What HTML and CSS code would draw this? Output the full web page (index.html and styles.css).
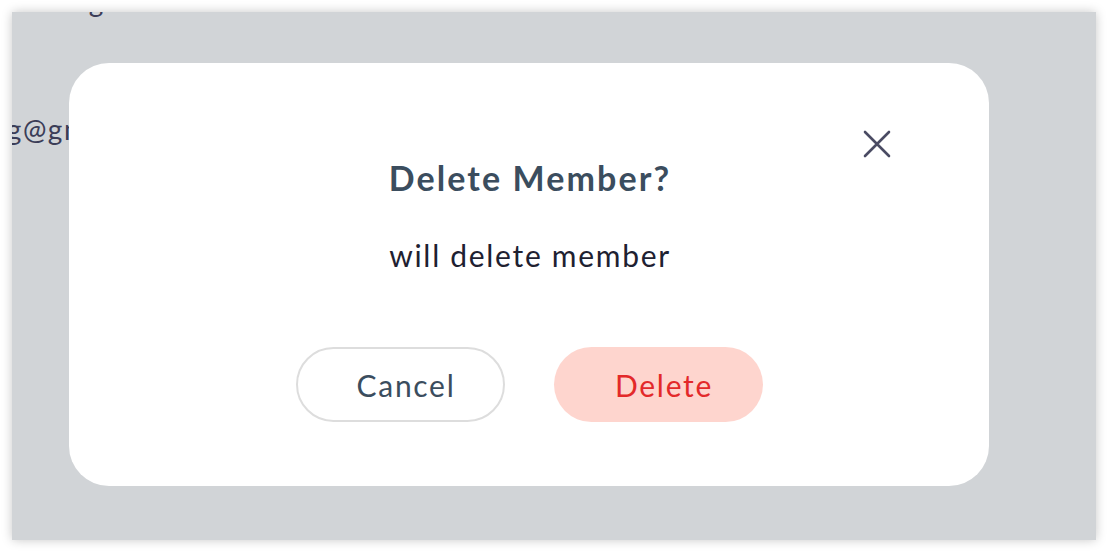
FILE: index.html
```html
<!DOCTYPE html>
<html lang="en">
<head>
<meta charset="utf-8">
<title>Delete Member</title>
<link rel="stylesheet" href="styles.css">
</head>
<body>
<div class="window">
  <div class="page">
    <div class="row row-top">Wang</div>
    <div class="row row-mail">ming@gmail.com</div>
  </div>
  <div class="backdrop">
    <div class="modal" role="dialog" aria-labelledby="dlg-title">
      <button class="close" aria-label="Close">
        <svg width="30" height="30" viewBox="0 0 30 30" fill="none" stroke="#4a4b63" stroke-width="2.6" stroke-linecap="round">
          <path d="M3 3 L27 27 M27 3 L3 27"/>
        </svg>
      </button>
      <h2 class="title" id="dlg-title">Delete Member?</h2>
      <p class="message">will delete member</p>
      <div class="actions">
        <button class="btn btn-cancel">Cancel</button>
        <button class="btn btn-delete">Delete</button>
      </div>
    </div>
  </div>
</div>
</body>
</html>
```
FILE: styles.css
```css
html, body {
  margin: 0;
  padding: 0;
  background: #ffffff;
}
body {
  padding: 12px;
  font-family: "Lato", "Open Sans", "Liberation Sans", sans-serif;
}
.window {
  position: relative;
  width: 1084px;
  height: 528px;
  background: #d1d4d7;
  overflow: hidden;
  box-shadow: 0 0 10px rgba(0, 0, 0, 0.22);
}
.page {
  display: flex;
  flex-direction: column;
  margin-left: -40px;
  margin-top: -31px;
  gap: 88px;
}
.row {
  font-size: 28px;
  line-height: 40px;
  letter-spacing: 0.6px;
  color: #3b3d57;
}
.row-top {
  padding-left: 58px;
}
.row-mail {
  margin-left: -15px;
  letter-spacing: 1.5px;
}
.backdrop {
  position: absolute;
  inset: 0;
  padding: 51px 107px 54px 57px;
  display: flex;
}
.modal {
  position: relative;
  flex: 1;
  background: #ffffff;
  border-radius: 40px;
  display: flex;
  flex-direction: column;
  align-items: center;
  padding-top: 94px;
  box-sizing: border-box;
}
.close {
  position: absolute;
  top: 66px;
  right: 97px;
  width: 30px;
  height: 30px;
  padding: 0;
  border: 0;
  background: transparent;
  display: flex;
}
.title {
  margin: 0;
  font-size: 34px;
  line-height: 42px;
  font-weight: 700;
  letter-spacing: 2.1px;
  text-indent: 2px;
  color: #3b4d5e;
}
.message {
  margin: 36px 0 0;
  font-size: 30px;
  line-height: 40px;
  letter-spacing: 1.7px;
  text-indent: 2px;
  color: #1e2131;
}
.actions {
  display: flex;
  gap: 49px;
  margin-top: 72px;
}
.btn {
  width: 209px;
  height: 75px;
  border-radius: 38px;
  padding: 0 0 0 12px;
  font-family: inherit;
  font-size: 30px;
  letter-spacing: 1.7px;
  box-sizing: border-box;
  cursor: pointer;
}
.btn-cancel {
  background: #ffffff;
  border: 2px solid #dddddd;
  color: #3b4d5e;
}
.btn-delete {
  background: #fed5ce;
  border: 0;
  color: #e3292a;
}
```
